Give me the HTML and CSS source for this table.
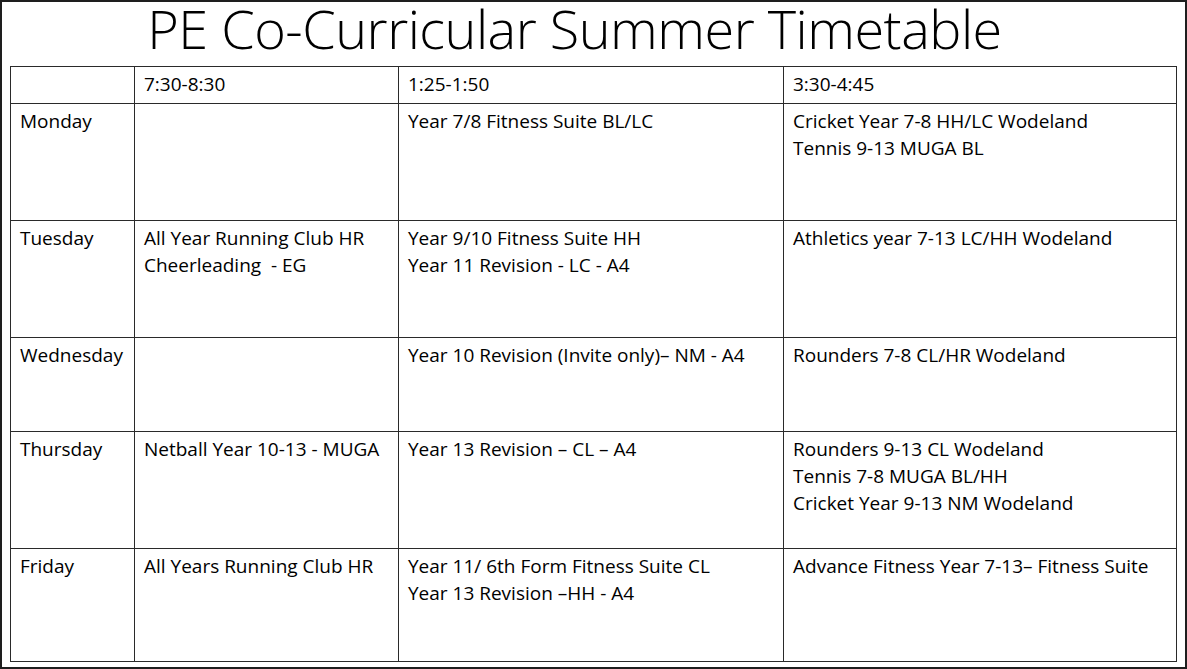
FILE: index.html
```html
<!DOCTYPE html>
<html>
<head>
<meta charset="utf-8">
<link rel="stylesheet" href="styles.css">
</head>
<body>
<div class="slide">
  <h1 class="title">PE Co-Curricular Summer Timetable</h1>
  <table class="timetable">
    <colgroup>
      <col class="c-day"><col class="c-am"><col class="c-lunch"><col class="c-pm">
    </colgroup>
    <tr class="r-head"><td></td><td>7:30-8:30</td><td>1:25-1:50</td><td>3:30-4:45</td></tr>
    <tr class="r-tall"><td>Monday</td><td></td><td>Year 7/8 Fitness Suite BL/LC</td><td>Cricket Year 7-8 HH/LC Wodeland<br>Tennis 9-13 MUGA BL</td></tr>
    <tr class="r-tall"><td>Tuesday</td><td>All Year Running Club HR<br>Cheerleading&nbsp; - EG</td><td>Year 9/10 Fitness Suite HH<br>Year 11 Revision - LC - A4</td><td>Athletics year 7-13 LC/HH Wodeland</td></tr>
    <tr class="r-short"><td>Wednesday</td><td></td><td>Year 10 Revision (Invite only)– NM - A4</td><td>Rounders 7-8 CL/HR Wodeland</td></tr>
    <tr class="r-tall"><td>Thursday</td><td>Netball Year 10-13 - MUGA</td><td>Year 13 Revision – CL – A4</td><td>Rounders 9-13 CL Wodeland<br>Tennis 7-8 MUGA BL/HH<br>Cricket Year 9-13 NM Wodeland</td></tr>
    <tr class="r-last"><td>Friday</td><td>All Years Running Club HR</td><td>Year 11/ 6th Form Fitness Suite CL<br>Year 13 Revision –HH - A4</td><td>Advance Fitness Year 7-13– Fitness Suite</td></tr>
  </table>
</div>
</body>
</html>
```

FILE: styles.css
```css
html, body {
  margin: 0;
  padding: 0;
  background: #ffffff;
}
.slide {
  box-sizing: border-box;
  width: 1187px;
  height: 669px;
  border: 2px solid #1e1e1e;
  padding: 0 0 0 8px;
  font-family: "Open Sans", "Noto Sans", sans-serif;
  color: #000;
}
.title {
  margin: 0;
  box-sizing: border-box;
  height: 64px;
  padding-top: 3px;
  font-family: "Open Sans", sans-serif;
  font-weight: 300;
  font-size: 54px;
  line-height: 47px;
  text-align: center;
  padding-right: 46px;
  letter-spacing: -0.5px;
  overflow: visible;
}
.timetable {
  border-collapse: collapse;
  table-layout: fixed;
  width: 1166px;
  font-size: 19px;
  line-height: 27px;
}
.c-day { width: 124px; }
.c-am { width: 264px; }
.c-lunch { width: 385px; }
.c-pm { width: 393px; }
.timetable td {
  border: 1px solid #2a2a2a;
  padding: 4px 9px 0 9px;
  vertical-align: top;
  white-space: nowrap;
  box-sizing: border-box;
}
.r-head { height: 37px; }
.r-tall { height: 117px; }
.r-short { height: 94px; }
.r-last { height: 113px; }
```
